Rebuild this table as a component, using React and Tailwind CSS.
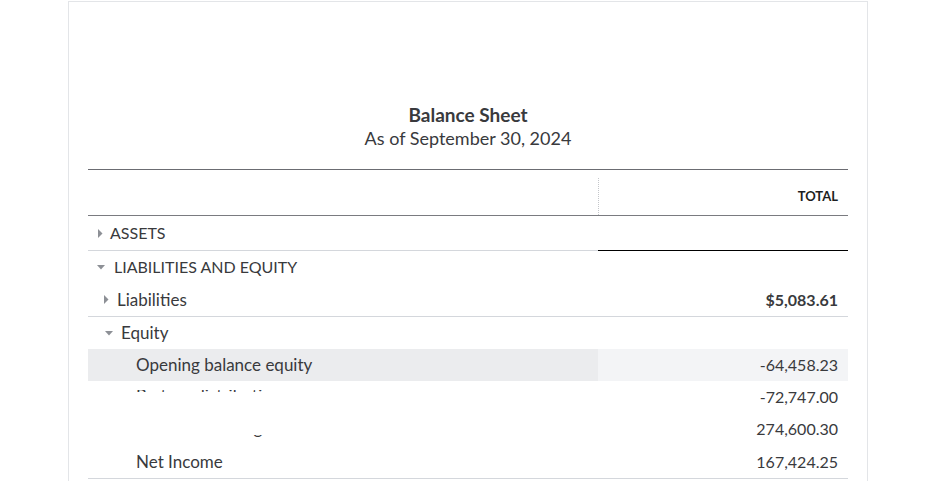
const font = { fontFamily: 'Lato, "Open Sans", sans-serif' };

function Caret({ open }) {
  if (open) {
    return (
      <svg width="8" height="5" viewBox="0 0 8 5" className="shrink-0">
        <path d="M0 0 L8 0 L4 4.5 Z" fill="#8d9096" />
      </svg>
    );
  }
  return (
    <svg width="5" height="9" viewBox="0 0 5 9" className="shrink-0">
      <path d="M0 0 L4.5 4.5 L0 9 Z" fill="#8d9096" />
    </svg>
  );
}

function Row({ children, amount, bold, className = 'h-[32px]', labelCls = '', amountCls = '' }) {
  return (
    <div className={`flex ${className}`}>
      <div className={`flex flex-1 items-center ${labelCls}`}>{children}</div>
      <div
        className={`flex w-[250px] items-center justify-end pr-[10px] text-[16px] ${
          bold ? 'font-bold' : ''
        } ${amountCls}`}
      >
        {amount}
      </div>
    </div>
  );
}

export default function App() {
  return (
    <div className="min-h-[481px] bg-white text-[#393a3d]" style={font}>
      <div className="ml-[68px] mt-[1px] h-[480px] w-[800px] border-x border-t border-[#e3e5e8] px-[19px]">
        <div className="pt-[100px] text-center">
          <div className="text-[19px] font-bold leading-[25px]">Balance Sheet</div>
          <div className="text-[18px] leading-[22px]">As of September 30, 2024</div>
        </div>

        <div className="mt-[20px] border-t border-[#6b6c72]">
          <div className="flex h-[46px] border-b border-[#7a7b80]">
            <div className="flex-1" />
            <div className="mt-[8px] flex w-[250px] items-center justify-end border-l border-dotted border-[#c4c6ca] pr-[10px] text-[13px] font-bold text-[#1d1e21]">
              TOTAL
            </div>
          </div>

          <Row
            className="h-[35px]"
            labelCls="border-b border-[#d4d7dc] pl-[10px]"
            amountCls="border-b border-black"
          >
            <Caret />
            <span className="ml-[7px] text-[16px]">ASSETS</span>
          </Row>

          <Row labelCls="pl-[9px]">
            <Caret open />
            <span className="ml-[9px] text-[16px]">LIABILITIES AND EQUITY</span>
          </Row>

          <Row
            amount="$5,083.61"
            bold
            className="h-[34px] border-b border-[#d4d7dc]"
            labelCls="pl-[16px]"
          >
            <Caret />
            <span className="ml-[8px] text-[17px]">Liabilities</span>
          </Row>

          <Row labelCls="pl-[17px]">
            <Caret open />
            <span className="ml-[8px] text-[17px]">Equity</span>
          </Row>

          <Row amount="-64,458.23" labelCls="bg-[#ebecee] pl-[48px]" amountCls="bg-[#f3f4f6]">
            <span className="text-[17px]">Opening balance equity</span>
          </Row>

          <Row amount="-72,747.00" labelCls="!items-start pl-[48px]">
            <div className="mt-[9px] h-[2px] overflow-hidden">
              <div className="-mt-[3px] text-[17px] leading-[17px]">Partner distributions</div>
            </div>
          </Row>

          <Row amount="274,600.30" labelCls="!items-start pl-[48px]">
            <div className="mt-[22px] h-[3px] overflow-hidden">
              <div className="-mt-[16px] text-[17px] leading-[17px]">Retained Earnings</div>
            </div>
          </Row>

          <Row amount="167,424.25" className="h-[34px] border-b border-[#d4d7dc]" labelCls="pl-[48px]">
            <span className="text-[17px]">Net Income</span>
          </Row>
        </div>
      </div>
    </div>
  );
}
